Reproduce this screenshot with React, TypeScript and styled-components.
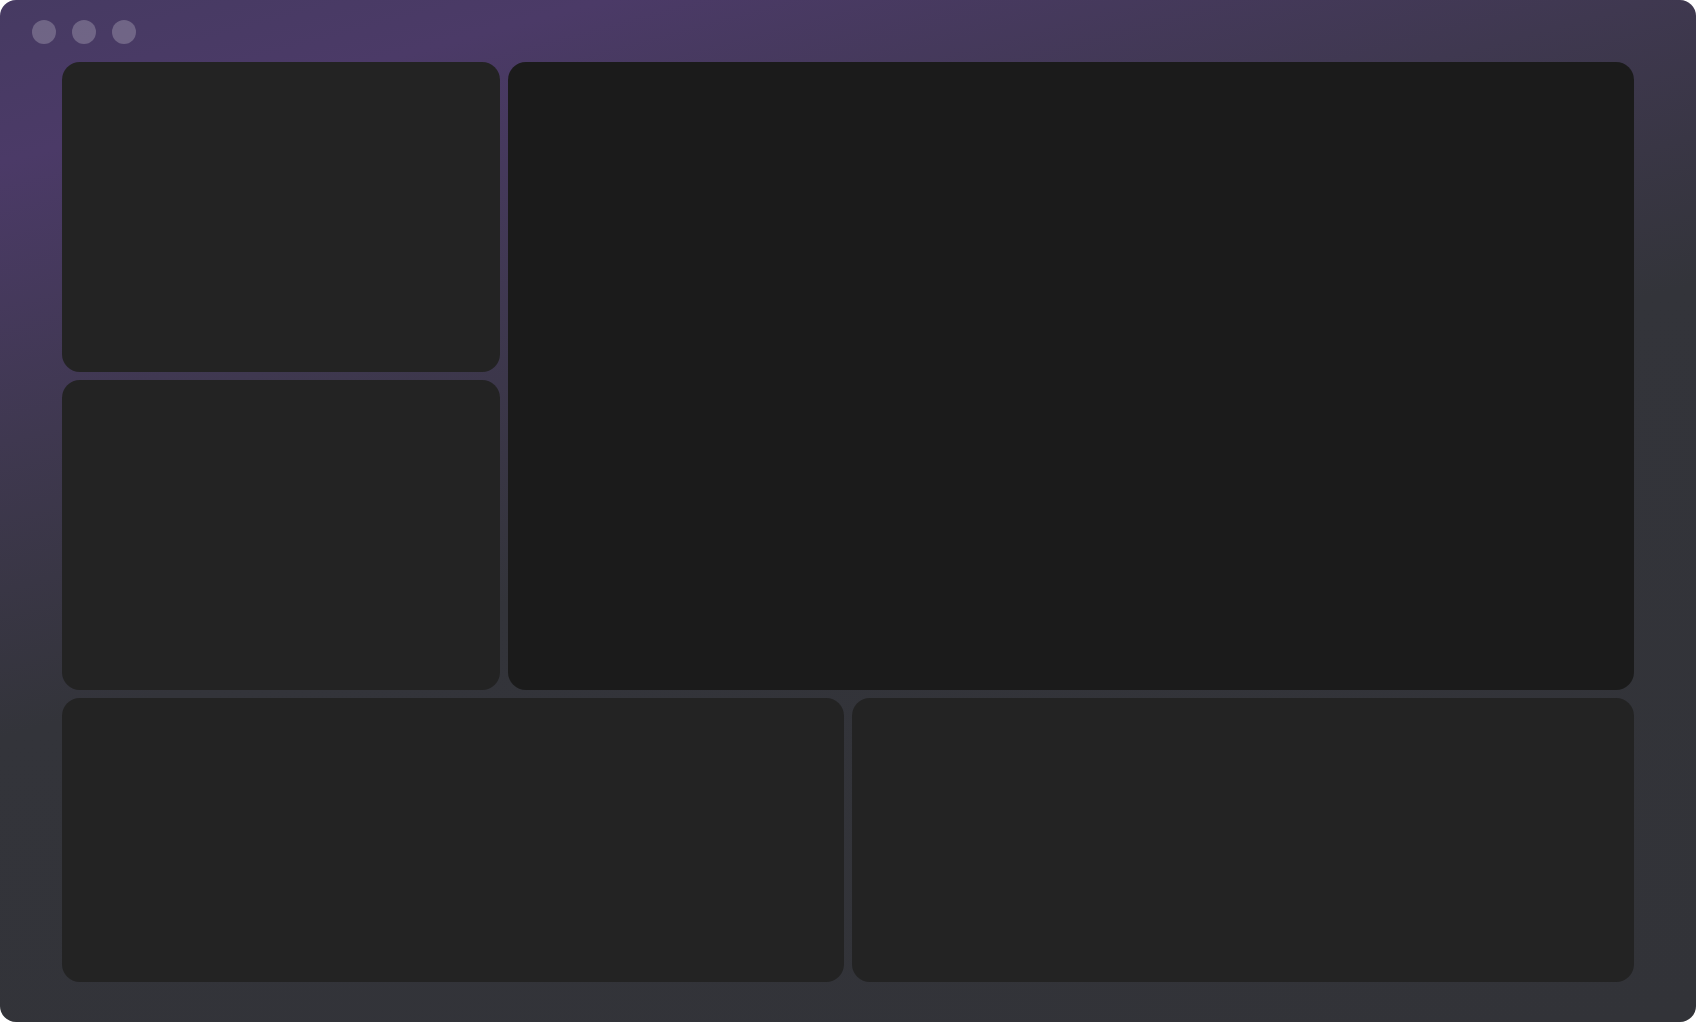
import React from "react";
import styled, { createGlobalStyle } from "styled-components";

const Global = createGlobalStyle`
  html, body { margin: 0; padding: 0; background: #ffffff; }
  body { font-family: "Inter", "Liberation Sans", sans-serif; }
  * { box-sizing: border-box; }
`;

const Window = styled.div`
  width: 1696px;
  height: 1022px;
  border-radius: 16px;
  overflow: hidden;
  display: flex;
  flex-direction: column;
  padding: 20px 0 40px;
  background: linear-gradient(
    165deg,
    #463a62 0%,
    #4b3a67 11%,
    #3f3850 30%,
    #33343a 50%,
    #323338 100%
  );
`;

const TitleBar = styled.div`
  display: flex;
  gap: 16px;
  padding: 0 32px;
  height: 24px;
`;

const Dot = styled.span`
  width: 24px;
  height: 24px;
  border-radius: 50%;
  background: rgba(255, 255, 255, 0.22);
`;

const Content = styled.div`
  flex: 1;
  margin: 18px 62px 0;
  display: flex;
  flex-direction: column;
  gap: 8px;
`;

const TopRow = styled.div`
  height: 628px;
  display: flex;
  gap: 8px;
`;

const SideColumn = styled.div`
  width: 438px;
  display: flex;
  flex-direction: column;
  gap: 8px;
`;

const BottomRow = styled.div`
  flex: 1;
  display: grid;
  grid-template-columns: 1fr 1fr;
  gap: 8px;
`;

const Panel = styled.div<{ $main?: boolean }>`
  flex: 1;
  border-radius: 18px;
  background: ${(p) => (p.$main ? "#1b1b1b" : "#232323")};
`;

export default function App() {
  return (
    <>
      <Global />
      <Window>
        <TitleBar>
          <Dot />
          <Dot />
          <Dot />
        </TitleBar>
        <Content>
          <TopRow>
            <SideColumn>
              <Panel />
              <Panel />
            </SideColumn>
            <Panel $main />
          </TopRow>
          <BottomRow>
            <Panel />
            <Panel />
          </BottomRow>
        </Content>
      </Window>
    </>
  );
}
